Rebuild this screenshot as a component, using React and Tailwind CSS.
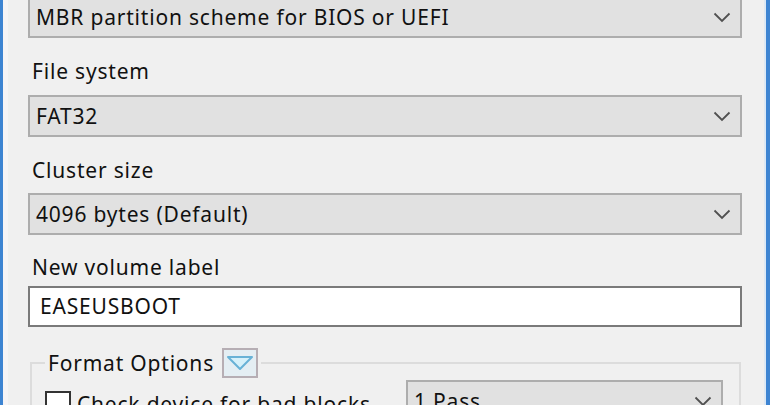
import React from 'react';

const font = { fontFamily: '"Noto Sans", "Segoe UI", sans-serif' };

// Combo box chevron, thin grey stroke
const Chevron = () => (
  <svg width="18" height="11" viewBox="0 0 18 11" className="shrink-0">
    <path d="M1.5 1.5 L9 9 L16.5 1.5" fill="none" stroke="#505050" strokeWidth="1.8" />
  </svg>
);

const Select = ({ value, className = '' }) => (
  <div className={`shrink-0 h-[42px] flex items-center justify-between bg-[#e1e1e1] border-2 border-[#adadad] pl-[6px] pr-[9px] ${className}`}>
    <span className="text-[21px] tracking-[0.8px] text-[#111] leading-none">{value}</span>
    <Chevron />
  </div>
);

const Label = ({ children, className = '' }) => (
  <div className={`shrink-0 text-[21px] tracking-[0.8px] leading-[28px] text-[#111] pl-[4px] ${className}`}>{children}</div>
);

export default function App() {
  return (
    <div className="w-[770px] h-[405px] overflow-hidden bg-[#f0f0f0] flex" style={font}>
      {/* window frame, left */}
      <div className="w-[3px] bg-[#3d84d2]" />
      <div className="w-[5px] bg-[#f6f4f6]" />

      <div className="flex-1 flex flex-col pl-[20px] pr-[22px]">
        <Select value="MBR partition scheme for BIOS or UEFI" className="-mt-[4px]" />

        <Label className="pt-[19px] pb-[10px]">File system</Label>
        <Select value="FAT32" />

        <Label className="pt-[19px] pb-[9px]">Cluster size</Label>
        <Select value="4096 bytes (Default)" />

        <Label className="pt-[18px] pb-[5px]">New volume label</Label>
        <div className="shrink-0 h-[41px] flex items-center bg-white border-2 border-[#7a7a7a] pl-[10px]">
          <span className="text-[21px] tracking-[0.8px] text-[#111] leading-none">EASEUSBOOT</span>
        </div>

        <fieldset className="shrink-0 mt-[21px] ml-[2px] mr-[1px] border-2 border-[#dcdcdc] px-[13px] pt-[2px] pb-[10px]">
          <legend className="flex items-center gap-[8px] px-[3px]">
            <span className="text-[21px] tracking-[0.8px] leading-[28px] text-[#111]">Format Options</span>
            <span className="w-[36px] h-[30px] flex items-center justify-center bg-[#e4eef3] border-2 border-[#b6aeb4]">
              <svg width="28" height="16" viewBox="0 0 28 16">
                <path d="M2 2 H26 L14 14 Z" fill="#d6f1fa" stroke="#68b2d6" strokeWidth="2" strokeLinejoin="round" />
              </svg>
            </span>
          </legend>
          <div className="flex items-start justify-between">
            <div className="flex items-center gap-[6px] pt-[10px]">
              <span className="shrink-0 w-[26px] h-[26px] bg-white border-2 border-[#333]" />
              <span className="text-[21px] tracking-[0.8px] leading-[28px] text-[#111] whitespace-nowrap">Check device for bad blocks</span>
            </div>
            <Select value="1 Pass" className="w-[317px] mr-[3px]" />
          </div>
        </fieldset>
      </div>

      {/* window frame, right */}
      <div className="w-[2px] bg-[#dce8f4]" />
      <div className="w-[4px] bg-[#3d84d2]" />
    </div>
  );
}
